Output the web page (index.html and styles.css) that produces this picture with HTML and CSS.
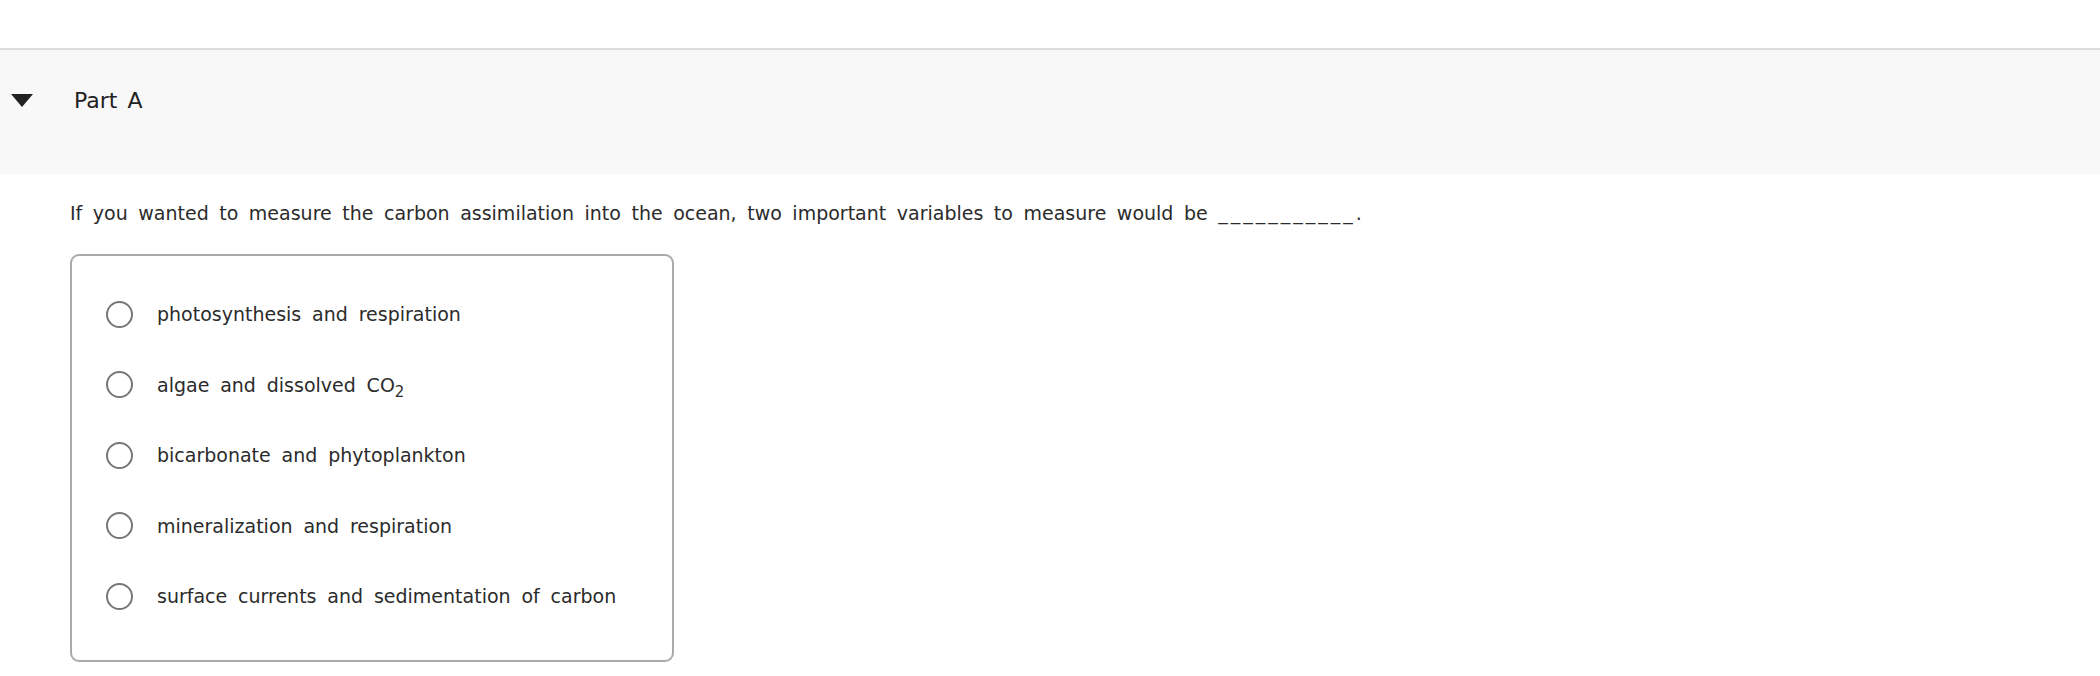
FILE: index.html
```html
<!DOCTYPE html>
<html lang="en">
<head>
<meta charset="utf-8">
<title>Part A</title>
<link rel="stylesheet" href="styles.css">
</head>
<body>
<section class="part">
  <div class="part-header">
    <span class="caret" aria-hidden="true"></span>
    <h2 class="part-title">Part A</h2>
  </div>
  <div class="part-body">
    <p class="question">If you wanted to measure the carbon assimilation into the ocean, two important variables to measure would be <span class="blank">___________</span>.</p>
    <div class="choices">
      <label class="choice"><span class="radio"></span><span class="choice-text">photosynthesis and respiration</span></label>
      <label class="choice"><span class="radio"></span><span class="choice-text">algae and dissolved CO<sub>2</sub></span></label>
      <label class="choice"><span class="radio"></span><span class="choice-text">bicarbonate and phytoplankton</span></label>
      <label class="choice"><span class="radio"></span><span class="choice-text">mineralization and respiration</span></label>
      <label class="choice"><span class="radio"></span><span class="choice-text">surface currents and sedimentation of carbon</span></label>
    </div>
  </div>
</section>
</body>
</html>
```

FILE: styles.css
```css
html, body {
  margin: 0;
  padding: 0;
  background: #ffffff;
}
body {
  font-family: "DejaVu Sans", "Liberation Sans", sans-serif;
  color: #2b2b2b;
  width: 2100px;
  height: 676px;
  overflow: hidden;
}
.part {
  padding-top: 48px;
}
.part-header {
  display: flex;
  align-items: center;
  box-sizing: border-box;
  height: 126px;
  border-top: 2px solid #dddddd;
  background: #f8f8f8;
  padding: 0 0 24px 11px;
}
.caret {
  width: 0;
  height: 0;
  border-left: 11px solid transparent;
  border-right: 11px solid transparent;
  border-top: 13px solid #222222;
  margin-top: 1px;
}
.part-title {
  margin: 0 0 0 41px;
  font-size: 22px;
  font-weight: normal;
  word-spacing: 3px;
  color: #222222;
}
.part-body {
  padding-left: 70px;
}
.question {
  margin: 27px 0 0 0;
  font-size: 19px;
  line-height: 24px;
  word-spacing: 4.5px;
}
.blank {
  letter-spacing: 3px;
}
.choices {
  margin-top: 29px;
  width: 600px;
  height: 381px;
  border: 2px solid #aaaaaa;
  border-radius: 9px;
  padding: 23px 0 0 0;
}
.choice {
  display: flex;
  align-items: center;
  height: 70.5px;
  padding-left: 34px;
  font-size: 19px;
  word-spacing: 4.8px;
}
.radio {
  width: 23px;
  height: 23px;
  border: 2px solid #777777;
  border-radius: 50%;
  flex: none;
  margin-right: 24px;
}
.choice-text sub {
  font-size: 15px;
  line-height: 0;
  vertical-align: -5px;
}
```
